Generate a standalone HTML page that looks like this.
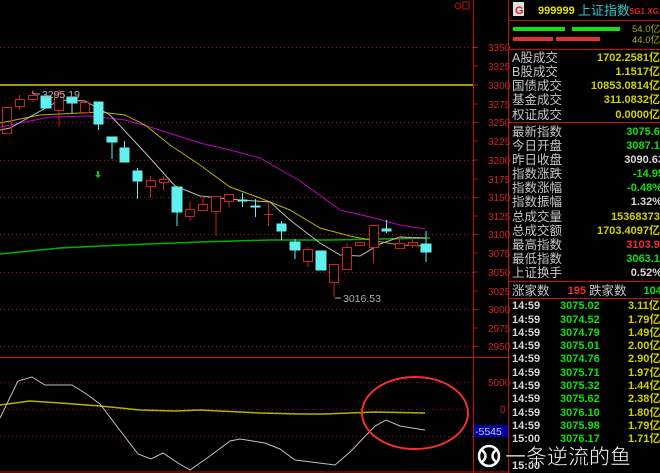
<!DOCTYPE html><html><head><meta charset="utf-8"><style>
body{margin:0;background:#000;width:660px;height:473px;overflow:hidden}
svg{display:block;font-family:"Liberation Sans","Noto Sans CJK SC",sans-serif}
.l{fill:#c8c8c8;font-size:12.5px}
.n{font-size:11px;font-weight:bold}
.ax{fill:#d02020;font-size:10px}
</style></head><body>
<svg width="660" height="473" viewBox="0 0 660 473">
<g stroke="#a01818" stroke-dasharray="1 3" stroke-width="1">
<line x1="0" y1="47.5" x2="473" y2="47.5"/><line x1="0" y1="122.5" x2="473" y2="122.5"/><line x1="0" y1="160.5" x2="473" y2="160.5"/><line x1="0" y1="197.5" x2="473" y2="197.5"/><line x1="0" y1="234.5" x2="473" y2="234.5"/><line x1="0" y1="272.5" x2="473" y2="272.5"/><line x1="0" y1="309.5" x2="473" y2="309.5"/><line x1="0" y1="346.5" x2="473" y2="346.5"/>
<line x1="0" y1="382.5" x2="473" y2="382.5"/><line x1="0" y1="409.5" x2="473" y2="409.5"/><line x1="0" y1="436.5" x2="473" y2="436.5"/>
</g>
<line x1="0" y1="85" x2="473" y2="85" stroke="#a09a00" stroke-width="2"/>
<g stroke="#c01010" fill="none"><line x1="0" y1="357.5" x2="510" y2="357.5"/><line x1="473.5" y1="0" x2="473.5" y2="473"/><line x1="508.5" y1="0" x2="508.5" y2="473"/><line x1="0" y1="472" x2="510" y2="472"/>
<line x1="509" y1="20.5" x2="660" y2="20.5"/><line x1="509" y1="49.5" x2="660" y2="49.5"/><line x1="509" y1="122.5" x2="660" y2="122.5"/><line x1="509" y1="281.5" x2="660" y2="281.5"/><line x1="509" y1="298.5" x2="660" y2="298.5"/>
<circle cx="458" cy="6" r="3"/><rect x="463" y="2" width="6" height="7"/></g>
<g stroke="#c01010"><line x1="473" y1="47.5" x2="478" y2="47.5"/><line x1="473" y1="66" x2="478" y2="66"/><line x1="473" y1="85" x2="478" y2="85"/><line x1="473" y1="104" x2="478" y2="104"/><line x1="473" y1="122.5" x2="478" y2="122.5"/><line x1="473" y1="141" x2="478" y2="141"/><line x1="473" y1="160" x2="478" y2="160"/><line x1="473" y1="179" x2="478" y2="179"/><line x1="473" y1="197.5" x2="478" y2="197.5"/><line x1="473" y1="216" x2="478" y2="216"/><line x1="473" y1="234.5" x2="478" y2="234.5"/><line x1="473" y1="253" x2="478" y2="253"/><line x1="473" y1="272" x2="478" y2="272"/><line x1="473" y1="291" x2="478" y2="291"/><line x1="473" y1="309.5" x2="478" y2="309.5"/><line x1="473" y1="328" x2="478" y2="328"/><line x1="473" y1="346.5" x2="478" y2="346.5"/></g>
<g class="ax" text-anchor="start">
<text x="488" y="51">3350</text><text x="488" y="70">3325</text><text x="488" y="89">3300</text><text x="488" y="108">3275</text><text x="488" y="126">3250</text><text x="488" y="145">3225</text><text x="488" y="164">3200</text><text x="488" y="183">3175</text><text x="488" y="201">3150</text><text x="488" y="220">3125</text><text x="488" y="238">3100</text><text x="488" y="257">3075</text><text x="488" y="276">3050</text><text x="488" y="295">3025</text><text x="488" y="313">3000</text><text x="488" y="332">2975</text><text x="488" y="350">2950</text>
<text x="488" y="386">5000</text><text x="500" y="413">0</text></g>
<rect x="474" y="425" width="34" height="12" fill="#0000a0"/><text x="475" y="435" fill="#c8c8ff" font-size="10.5">-5545</text>
<g fill="none" stroke-width="1">
<polyline stroke="#00b000" stroke-width="1.5" points="0,254 60,248 100,246 200,242 270,240 330,240 430,238"/>
<polyline stroke="#c000c0" points="0,127 50,117 90,116 125,120 150,127 200,143 230,150 260,158 300,181 340,210 370,217 400,225 425,229"/>
<polyline stroke="#b8b000" points="0,123 40,115 100,112 125,115 145,125 170,145 200,165 230,187 260,198 290,210 320,228 350,236 370,240 400,245 425,246"/>
<polyline stroke="#c0c0c0" points="0,130 10,128 60,100 85,101 110,115 150,158 175,186 200,196 240,200 270,202 290,220 320,243 340,255 360,256 380,244 400,237 425,238"/>
</g>
<g stroke="#d02020" fill="none" stroke-width="1">
<rect x="2.5" y="107.5" width="9" height="26"/><line x1="19.5" y1="95" x2="19.5" y2="110"/><rect x="15.5" y="99.5" width="9" height="7" fill="#000"/><line x1="33" y1="90" x2="33" y2="102"/><rect x="28.5" y="95.5" width="9" height="4" fill="#000"/><line x1="59" y1="90" x2="59" y2="126"/><rect x="54.5" y="93.5" width="9" height="17" fill="#000"/><rect x="80.5" y="102.5" width="9" height="10"/><line x1="150.5" y1="176" x2="150.5" y2="198"/><rect x="146.5" y="180.5" width="9" height="6" fill="#000"/><line x1="163.5" y1="176" x2="163.5" y2="190"/><rect x="159.5" y="179.5" width="9" height="3" fill="#000"/><line x1="190" y1="201" x2="190" y2="221"/><rect x="185.5" y="209.5" width="9" height="7" fill="#000"/><line x1="203" y1="196" x2="203" y2="210"/><rect x="198.5" y="204.5" width="9" height="6" fill="#000"/><line x1="216" y1="196" x2="216" y2="236"/><rect x="211.5" y="196.5" width="9" height="15" fill="#000"/><line x1="229" y1="194" x2="229" y2="207"/><rect x="224.5" y="194.5" width="9" height="7" fill="#000"/><line x1="268.5" y1="202" x2="268.5" y2="226"/><line x1="264" y1="214.5" x2="273" y2="214.5"/><line x1="308" y1="247" x2="308" y2="267"/><rect x="303.5" y="249.5" width="9" height="12" fill="#000"/><line x1="334" y1="264" x2="334" y2="297"/><rect x="329.5" y="264.5" width="9" height="18" fill="#000"/><line x1="347" y1="243" x2="347" y2="269"/><rect x="342.5" y="247.5" width="9" height="22" fill="#000"/><rect x="355.5" y="242.5" width="9" height="3"/><line x1="373.5" y1="225" x2="373.5" y2="263"/><rect x="369.5" y="225.5" width="9" height="22" fill="#000"/><line x1="399.5" y1="236" x2="399.5" y2="249"/><rect x="395.5" y="243.5" width="9" height="5" fill="#000"/><line x1="412.5" y1="237" x2="412.5" y2="248"/><rect x="408.5" y="242.5" width="9" height="3" fill="#000"/>
</g>
<g fill="#60f0f0" stroke="#60f0f0">
<rect x="41" y="96" width="10" height="12"/><line x1="72" y1="97" x2="72" y2="113"/><rect x="67" y="97" width="10" height="6"/><line x1="98.5" y1="102" x2="98.5" y2="130"/><rect x="94" y="102" width="9" height="22"/><line x1="112" y1="137" x2="112" y2="159"/><rect x="107" y="137" width="10" height="5"/><line x1="124.5" y1="141" x2="124.5" y2="162"/><rect x="120" y="148" width="9" height="14"/><line x1="137.5" y1="168" x2="137.5" y2="199"/><rect x="133" y="171" width="9" height="10"/><line x1="177" y1="187" x2="177" y2="226"/><rect x="172" y="187" width="10" height="25"/><line x1="242.5" y1="193" x2="242.5" y2="207"/><rect x="238" y="200" width="9" height="1"/><line x1="255.5" y1="199" x2="255.5" y2="217"/><rect x="251" y="206" width="9" height="1"/><line x1="281.5" y1="221" x2="281.5" y2="240"/><rect x="277" y="224" width="9" height="7"/><line x1="295" y1="239" x2="295" y2="259"/><rect x="290" y="242" width="10" height="8"/><rect x="316" y="251" width="10" height="19"/><line x1="386.5" y1="220" x2="386.5" y2="233"/><rect x="382" y="229" width="9" height="2"/><line x1="426" y1="231" x2="426" y2="262"/><rect x="421" y="244" width="10" height="8"/>
</g>
<path d="M98,244 l-3,-3 h2 v-4 h2 v4 h2 z" fill="#00d000" transform="translate(0,-66)"/>
<g fill="#b0b0b0" font-size="10.5"><text x="42" y="98">3295.19</text><text x="343" y="302">3016.53</text></g>
<g stroke="#b0b0b0" fill="none"><path d="M40,94 h-6 l-2,-2"/><path d="M341,298 h-6"/></g>
<polyline fill="none" stroke="#b8b000" stroke-width="1.5" points="0,405 30,401 60,403 100,406 140,410 175,411 200,410 260,413 300,414 325,414 350,413 375,412 425,413"/>
<polyline fill="none" stroke="#c0c0c0" points="0,418 18,381 32,377 45,385 72,385 85,393 100,404 125,437 138,454 151,459 163,453 178,463 190,470 210,456 230,441 240,439 265,443 280,449 295,460 335,465 350,452 375,426 386,420 400,426 425,430"/>
<ellipse cx="415" cy="413" rx="53" ry="36" fill="none" stroke="#f03030" stroke-width="2"/>
<rect x="513" y="2" width="11" height="14" fill="#e0e0e0"/><text x="515" y="14" fill="#e02020" font-size="11" font-weight="bold">G</text>
<text x="538" y="14" fill="#e0e000" font-size="11" font-weight="bold">999999</text>
<text x="578" y="15" fill="#30c8c8" font-size="13">上证指数</text>
<text x="629" y="14" fill="#e02020" font-size="8" font-weight="bold">SG1 XG1</text>
<rect x="513" y="27" width="52" height="4" fill="#10e010"/><rect x="572" y="27" width="48" height="4" fill="#10e010"/>
<rect x="513" y="37" width="40" height="4" fill="#e03030"/><rect x="556" y="37" width="44" height="4" fill="#e03030"/>
<g fill="#b0b000" font-size="9.5" text-anchor="end"><text x="660" y="32">54.0亿</text><text x="660" y="43">44.0亿</text></g>
<g class="l">
<text x="512" y="62">A股成交</text><text x="512" y="76">B股成交</text><text x="512" y="90">国债成交</text><text x="512" y="104">基金成交</text><text x="512" y="119">权证成交</text>
<text x="512" y="136">最新指数</text><text x="512" y="150">今日开盘</text><text x="512" y="164">昨日收盘</text><text x="512" y="178">指数涨跌</text><text x="512" y="192">指数涨幅</text><text x="512" y="206">指数振幅</text><text x="512" y="221">总成交量</text><text x="512" y="235">总成交额</text><text x="512" y="249">最高指数</text><text x="512" y="263">最低指数</text><text x="512" y="277">上证换手</text>
<text x="512" y="295">涨家数</text><text x="589" y="295">跌家数</text></g>
<g class="n" text-anchor="end">
<g fill="#d0d000"><text x="660" y="61">1702.2581亿</text><text x="660" y="75">1.1517亿</text><text x="660" y="89">10853.0814亿</text><text x="660" y="103">311.0832亿</text><text x="660" y="118">0.0000亿</text><text x="666" y="220">153683730</text><text x="660" y="234">1703.4097亿</text></g>
<g fill="#10e010"><text x="666" y="135">3075.68</text><text x="666" y="149">3087.17</text><text x="664" y="177">-14.95</text><text x="662" y="191">-0.48%</text><text x="666" y="262">3063.15</text></g>
<g fill="#d8d8d8"><text x="664" y="163">3090.63</text><text x="662" y="205">1.32%</text><text x="662" y="276">0.52%</text></g>
<text x="666" y="248" fill="#f03030">3103.94</text>
<text x="586" y="294" fill="#f03030">195</text><text x="668" y="294" fill="#10e010">1046</text>
</g>
<g class="n">
<g fill="#d8d8d8"><text x="512" y="309">14:59</text><text x="512" y="323">14:59</text><text x="512" y="336">14:59</text><text x="512" y="349">14:59</text><text x="512" y="362">14:59</text><text x="512" y="376">14:59</text><text x="512" y="389">14:59</text><text x="512" y="402">14:59</text><text x="512" y="416">14:59</text><text x="512" y="429">14:59</text><text x="512" y="442">15:00</text><text x="512" y="469">15:00</text></g>
<g fill="#10e010"><text x="560" y="309">3075.02</text><text x="560" y="323">3074.52</text><text x="560" y="336">3074.79</text><text x="560" y="349">3075.01</text><text x="560" y="362">3074.76</text><text x="560" y="376">3075.71</text><text x="560" y="389">3075.32</text><text x="560" y="402">3075.62</text><text x="560" y="416">3076.10</text><text x="560" y="429">3075.98</text><text x="560" y="442">3076.17</text></g>
<g fill="#d0d000"><text x="628" y="309">3.11亿</text><text x="628" y="323">1.79亿</text><text x="628" y="336">1.49亿</text><text x="628" y="349">2.00亿</text><text x="628" y="362">2.90亿</text><text x="628" y="376">1.97亿</text><text x="628" y="389">1.44亿</text><text x="628" y="402">2.38亿</text><text x="628" y="416">1.80亿</text><text x="628" y="429">1.79亿</text><text x="628" y="442">1.71亿</text></g>
</g>
<circle cx="489" cy="456" r="10" fill="none" stroke="#fff" stroke-width="2.5"/>
<path d="M482,450 q7,6 0,12 M496,450 q-7,6 0,12" fill="none" stroke="#fff" stroke-width="2.5"/>
<text x="505" y="464" fill="#fff" font-size="21" stroke="#000" stroke-width="0.5">一条逆流的鱼</text>
</svg></body></html>
